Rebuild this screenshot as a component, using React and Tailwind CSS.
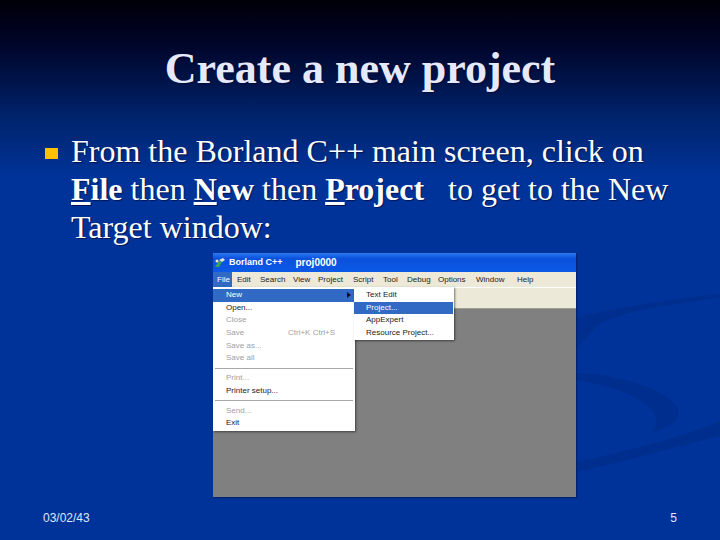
const SANS = "font-['Liberation_Sans',Arial,sans-serif]";

const Swoosh = () => (
  <svg className="absolute inset-0 w-[720px] h-[540px]" viewBox="0 0 720 540" fill="#002c88" fillOpacity="0.6">
    <path d="M576 318 C610 308 670 299 720 294 L720 298 C670 304 620 312 600 324 C590 332 584 342 576 349 Z" />
    <path d="M576 373 C620 374 668 390 678 408 C682 420 668 428 652 433 C660 422 656 410 640 400 C622 390 600 384 576 380 Z" />
    <path d="M576 462 C630 450 680 438 720 421 L720 436 C680 446 630 460 576 472 Z" />
  </svg>
);

const MenuItem = ({ label, hint, disabled, active, arrow }) => (
  <div
    className={`flex items-center h-[12.6px] pl-[13px] pr-[4px] text-[8px] ${
      active ? "bg-[#316ac5] text-white" : disabled ? "text-[#a0a0a0]" : "text-[#222]"
    }`}
  >
    <span className="w-[62px] whitespace-nowrap">{label}</span>
    {hint && <span className="whitespace-nowrap">{hint}</span>}
    {arrow && <span className="ml-auto w-0 h-0 border-y-[3px] border-y-transparent border-l-[4px] border-l-[#111]" />}
  </div>
);

const SubItem = ({ label, active }) => (
  <div
    className={`flex items-center h-[12.6px] pl-[12px] mr-px text-[8px] whitespace-nowrap ${
      active ? "bg-[#316ac5] text-white" : "text-[#222]"
    }`}
  >
    {label}
  </div>
);

const Divider = () => <div className="h-px bg-[#a8a8a8] mx-[2px] mt-[3px] mb-[3.4px]" />;

const menus = [
  ["Edit", "w-[23px]"],
  ["Search", "w-[33px]"],
  ["View", "w-[25px]"],
  ["Project", "w-[35px]"],
  ["Script", "w-[30px]"],
  ["Tool", "w-[24px]"],
  ["Debug", "w-[31px]"],
  ["Options", "w-[38px]"],
  ["Window", "w-[41px]"],
  ["Help", "w-[20px]"],
];

const Screenshot = () => (
  <div className={`relative w-[363px] h-[244px] ml-[213px] flex flex-col bg-[#808080] shadow-[1px_1px_1px_rgba(0,20,80,0.5)] ${SANS}`}>
    <div className="h-[19px] flex items-center gap-[3px] px-[1px] bg-gradient-to-b from-[#2a78f0] via-[#0a50dc] via-[30%] to-[#0c5ae8] text-white text-[9px] font-bold">
      <svg width="12" height="11" viewBox="0 0 12 11">
        <path d="M1 10 L5 4 L8 5 L5 10 Z" fill="#3aa655" />
        <path d="M5 3 L9 1 L11 3 L8 5 Z" fill="#e8e4c8" />
        <circle cx="3" cy="4" r="1.5" fill="#e8e4c8" />
      </svg>
      <span>Borland C++</span>
      <span className="ml-[10px] text-[10px]">proj0000</span>
    </div>
    <div className="h-[15px] flex items-center bg-[#ece9d8] text-[8px] text-[#222]">
      <span className="w-[19px] self-stretch flex items-center pl-[4px] bg-[#316ac5] text-white">File</span>
      <div className="flex pl-[5px] whitespace-nowrap">
        {menus.map(([name, width]) => (
          <span key={name} className={width}>{name}</span>
        ))}
      </div>
    </div>
    <div className="h-[1px] bg-white" />
    <div className="h-[21px] bg-[#ece9d8] border-b border-[#a09e94]" />

    <div className="absolute left-0 top-[34px] w-[142px] bg-white pt-[2px] pb-px shadow-[1px_1px_2px_rgba(0,0,0,0.5)]">
      <MenuItem label="New" active arrow />
      <MenuItem label="Open..." />
      <MenuItem label="Close" disabled />
      <MenuItem label="Save" hint="Ctrl+K Ctrl+S" disabled />
      <MenuItem label="Save as..." disabled />
      <MenuItem label="Save all" disabled />
      <Divider />
      <MenuItem label="Print..." disabled />
      <MenuItem label="Printer setup..." />
      <Divider />
      <MenuItem label="Send..." disabled />
      <MenuItem label="Exit" />
    </div>

    <div className="absolute left-[141px] top-[34px] w-[100px] bg-white pt-[2px] pb-px shadow-[1px_1px_2px_rgba(0,0,0,0.5)]">
      <SubItem label="Text Edit" />
      <SubItem label="Project..." active />
      <SubItem label="AppExpert" />
      <SubItem label="Resource Project..." />
    </div>

    <div className="flex-1" />
  </div>
);

export default function App() {
  return (
    <div className="relative w-[720px] h-[540px] overflow-hidden bg-gradient-to-b from-[#000008] via-[#00246e] via-[22%] to-[#003399] to-[33%] font-['Liberation_Serif','Times_New_Roman',serif]">
      <Swoosh />
      <div className="relative h-full flex flex-col">
        <h1 className="pt-[43px] h-[132px] text-center text-[44px] leading-[52px] font-bold text-[#e6e9fb] [text-shadow:1px_1px_2px_rgba(0,0,40,0.5)]">
          Create a new project
        </h1>

        <div className="flex h-[121px] text-[32px] leading-[38px] text-white [text-shadow:1px_1px_1px_rgba(0,0,40,0.6)]">
          <div className="w-[71px] pl-[45px] pt-[16px] shrink-0">
            <div className="w-[13px] h-[11px] bg-[#ffc000]" />
          </div>
          <p className="w-[640px] whitespace-pre">
            {"From the Borland C++ main screen, click on\n"}
            <b><u>F</u>ile</b>
            {" then "}
            <b><u>N</u>ew</b>
            {" then "}
            <b><u>P</u>roject</b>
            {"   to get to the New\nTarget window:"}
          </p>
        </div>

        <Screenshot />

        <div className={`flex justify-between items-center pt-[13px] pl-[43px] pr-[43px] text-[12px] leading-[16px] text-[#dfe6ff] ${SANS}`}>
          <span>03/02/43</span>
          <span>5</span>
        </div>
      </div>
    </div>
  );
}
